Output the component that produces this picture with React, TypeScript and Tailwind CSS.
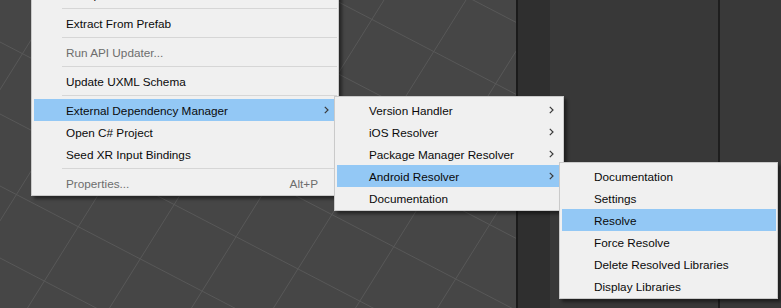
import React from 'react'

type Item =
  | { kind: 'item'; label: string; disabled?: boolean; sub?: boolean; active?: boolean; shortcut?: string }
  | { kind: 'sep' }

const mainMenu: Item[] = [
  { kind: 'item', label: 'Reimport All' },
  { kind: 'sep' },
  { kind: 'item', label: 'Extract From Prefab' },
  { kind: 'sep' },
  { kind: 'item', label: 'Run API Updater...', disabled: true },
  { kind: 'sep' },
  { kind: 'item', label: 'Update UXML Schema' },
  { kind: 'sep' },
  { kind: 'item', label: 'External Dependency Manager', sub: true, active: true },
  { kind: 'item', label: 'Open C# Project' },
  { kind: 'item', label: 'Seed XR Input Bindings' },
  { kind: 'sep' },
  { kind: 'item', label: 'Properties...', disabled: true, shortcut: 'Alt+P' },
]

const edmMenu: Item[] = [
  { kind: 'item', label: 'Version Handler', sub: true },
  { kind: 'item', label: 'iOS Resolver', sub: true },
  { kind: 'item', label: 'Package Manager Resolver', sub: true },
  { kind: 'item', label: 'Android Resolver', sub: true, active: true },
  { kind: 'item', label: 'Documentation' },
]

const androidMenu: Item[] = [
  { kind: 'item', label: 'Documentation' },
  { kind: 'item', label: 'Settings' },
  { kind: 'item', label: 'Resolve', active: true },
  { kind: 'item', label: 'Force Resolve' },
  { kind: 'item', label: 'Delete Resolved Libraries' },
  { kind: 'item', label: 'Display Libraries' },
]

function Chevron() {
  return (
    <svg width="5" height="8" viewBox="0 0 5 8" className="absolute right-[8px] top-[7px]">
      <path d="M0.8 0.8 L4 4 L0.8 7.2" fill="none" stroke="#3a3a3a" strokeWidth="1.2" />
    </svg>
  )
}

function Menu({ items, className }: { items: Item[]; className: string }) {
  return (
    <div
      className={`absolute border border-[#cacaca] bg-[#f0f0f0] pt-[2px] pb-[1px] pl-[2px] pr-[1px] shadow-[3px_3px_3px_rgba(0,0,0,0.45)] ${className}`}
    >
      {items.map((it, i) =>
        it.kind === 'sep' ? (
          <div key={i} className="h-[7px] flex items-center pl-[28px]">
            <div className="h-px w-full bg-[#d6d6d6]" />
          </div>
        ) : (
          <div
            key={i}
            className={`relative h-[22px] flex items-center pl-[32px] pt-[2px] ${it.active ? 'bg-[#93c8f5]' : ''} ${
              it.disabled ? 'text-[#6d6d6d]' : 'text-[#0a0a0a]'
            }`}
          >
            <span>{it.label}</span>
            {it.shortcut && <span className="absolute right-[19px]">{it.shortcut}</span>}
            {it.sub && <Chevron />}
          </div>
        )
      )}
    </div>
  )
}

function SceneGrid() {
  const a: React.ReactElement[] = []
  for (let k = -10; k < 12; k++) {
    const y0 = k * 72 - 30
    a.push(<line key={'a' + k} x1={0} y1={y0} x2={520} y2={y0 + 520 * 0.52} />)
  }
  for (let k = -4; k < 12; k++) {
    const x0 = k * 82 + 20
    a.push(<line key={'b' + k} x1={x0} y1={320} x2={x0 + 320 / 1.6} y2={0} />)
  }
  return (
    <svg width="516" height="308" className="block">
      <rect width="516" height="308" fill="#464646" />
      <g stroke="#585858" strokeWidth="1">{a}</g>
    </svg>
  )
}

export default function App() {
  return (
    <div
      className="relative w-[781px] h-[308px] overflow-hidden flex text-[11.75px] leading-none"
      style={{ fontFamily: '"Liberation Sans", Arial, sans-serif' }}
    >
      <div className="w-[516px] shrink-0">
        <SceneGrid />
      </div>
      <div className="w-[2px] shrink-0 bg-[#1b1b1b]" />
      <div className="w-[32px] shrink-0 bg-[#2f2f2f]" />
      <div className="w-[168px] shrink-0 bg-[#383838]" />
      <div className="w-[2px] shrink-0 bg-[#1e1e1e]" />
      <div className="flex-1 bg-[#393939]" />

      <Menu items={mainMenu} className="left-[31px] top-[-20px] w-[308px]" />
      <Menu items={edmMenu} className="left-[334px] top-[96px] w-[230px]" />
      <Menu items={androidMenu} className="left-[559px] top-[162px] w-[219px]" />
    </div>
  )
}
